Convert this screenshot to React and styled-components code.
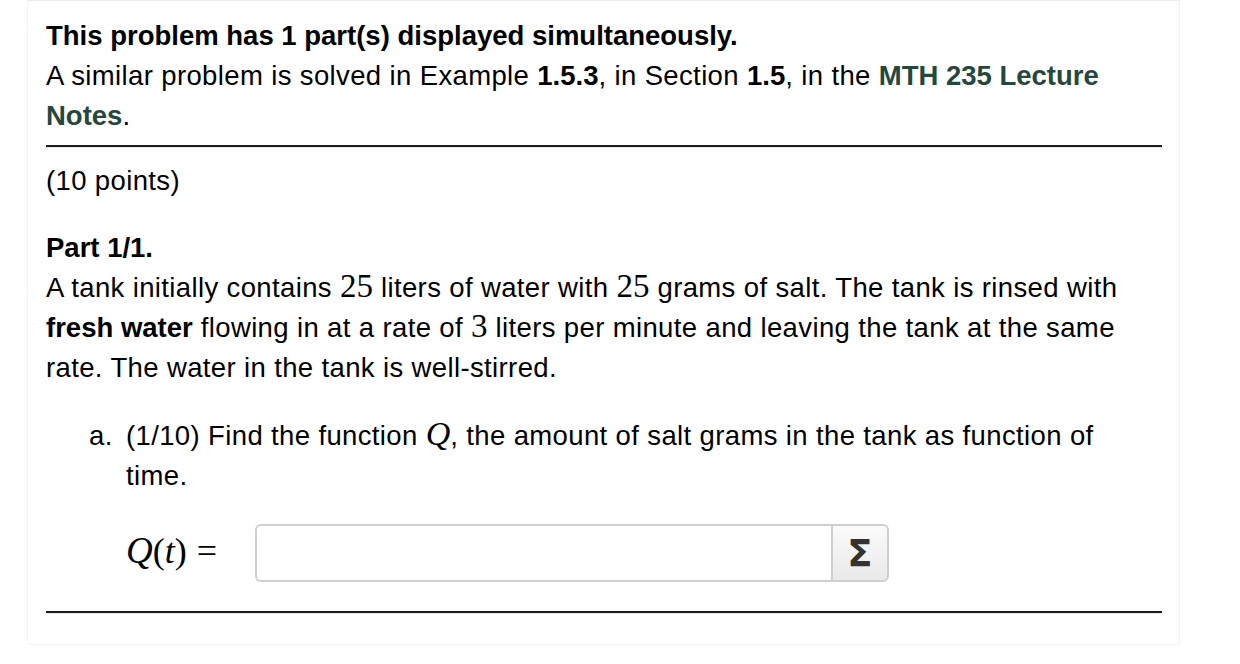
import React from 'react'
import styled, { createGlobalStyle } from 'styled-components'

const GlobalStyle = createGlobalStyle`
  body {
    margin: 0;
    background: #ffffff;
    font-family: "Liberation Sans", Arial, Helvetica, sans-serif;
    color: #000;
  }
`

const Page = styled.div`
  padding-left: 27px;
`

const Panel = styled.div`
  width: 1153px;
  box-sizing: border-box;
  border: 1px solid #f4f4f4;
  border-top-color: #ececec;
  padding: 15px 17px 30px 18px;
  font-size: 27.5px;
  line-height: 40px;
  letter-spacing: 0.37px;
`

const Heading = styled.div`
  font-weight: bold;
  letter-spacing: 0;
  margin-top: ${p => p.$mt || 0}px;
`

const Para = styled.div`
  margin: ${p => p.$mt || 0}px 0 0 0;
`

const Strong = styled.b`
  letter-spacing: 0;
`

const LinkText = styled.span`
  color: #25473d;
  font-weight: bold;
  letter-spacing: 0;
`

const Rule = styled.div`
  height: 2px;
  background: #1c1c1c;
  border-bottom: 1px solid #e8e8e8;
  margin: ${p => p.$mt}px 0 0 0;
`

const Num = styled.span`
  font-family: "Liberation Serif", "Times New Roman", serif;
  font-size: 33px;
  line-height: 1;
  letter-spacing: 0;
`

const MathVar = styled.span`
  font-family: "Liberation Serif", "Times New Roman", serif;
  font-style: italic;
  font-size: ${p => p.$size || 34}px;
  line-height: 1;
  letter-spacing: 0;
`

const MathUp = styled.span`
  font-family: "Liberation Serif", "Times New Roman", serif;
  font-size: 36px;
  line-height: 1;
  letter-spacing: 0;
  margin-left: ${p => p.$gap || 0}px;
`

const List = styled.ol`
  list-style: none;
  margin: 28px 0 0 0;
  padding: 0 40px 0 43px;
`

const Item = styled.li`
  display: grid;
  grid-template-columns: 37px 1fr;
`

const Marker = styled.span``

const AnswerRow = styled.div`
  display: flex;
  align-items: center;
  margin-top: 28px;
`

const AnswerLabel = styled.div`
  width: 129px;
  white-space: nowrap;
`

const InputGroup = styled.div`
  display: flex;
  height: 58px;
`

const Field = styled.input`
  width: 576px;
  box-sizing: border-box;
  border: 2px solid #cfcfcf;
  border-right: none;
  border-radius: 6px 0 0 6px;
  background: #fff;
  outline: none;
`

const SigmaButton = styled.button`
  width: 58px;
  box-sizing: border-box;
  border: 2px solid #cfcfcf;
  border-radius: 0 6px 6px 0;
  background: linear-gradient(#fbfbfb, #e9e9e9);
  font-family: "DejaVu Sans", sans-serif;
  font-weight: bold;
  font-size: 37px;
  line-height: 1;
  color: #333;
  padding: 0;
  cursor: pointer;
`

export default function App() {
  return (
    <Page>
      <GlobalStyle />
      <Panel>
        <Heading>This problem has 1 part(s) displayed simultaneously.</Heading>
        <Para>
          A similar problem is solved in Example <Strong>1.5.3</Strong>, in Section <Strong>1.5</Strong>, in the{' '}
          <LinkText>MTH 235 Lecture Notes</LinkText>.
        </Para>
        <Rule $mt={9} />
        <Para $mt={13}>(10 points)</Para>
        <Heading $mt={27}>Part 1/1.</Heading>
        <Para>
          A tank initially contains <Num>25</Num> liters of water with <Num>25</Num> grams of salt. The tank is
          rinsed with <Strong>fresh water</Strong> flowing in at a rate of <Num>3</Num> liters per minute and leaving
          the tank at the same rate. The water in the tank is well-stirred.
        </Para>
        <List>
          <Item>
            <Marker>a.</Marker>
            <div>
              (1/10) Find the function <MathVar>Q</MathVar>, the amount of salt grams in the tank as function of
              time.
              <AnswerRow>
                <AnswerLabel>
                  <MathVar $size={37}>Q</MathVar>
                  <MathUp>(</MathUp>
                  <MathVar $size={36}>t</MathVar>
                  <MathUp>)</MathUp>
                  <MathUp $gap={10}>=</MathUp>
                </AnswerLabel>
                <InputGroup>
                  <Field type="text" />
                  <SigmaButton>Σ</SigmaButton>
                </InputGroup>
              </AnswerRow>
            </div>
          </Item>
        </List>
        <Rule $mt={29} />
      </Panel>
    </Page>
  )
}
